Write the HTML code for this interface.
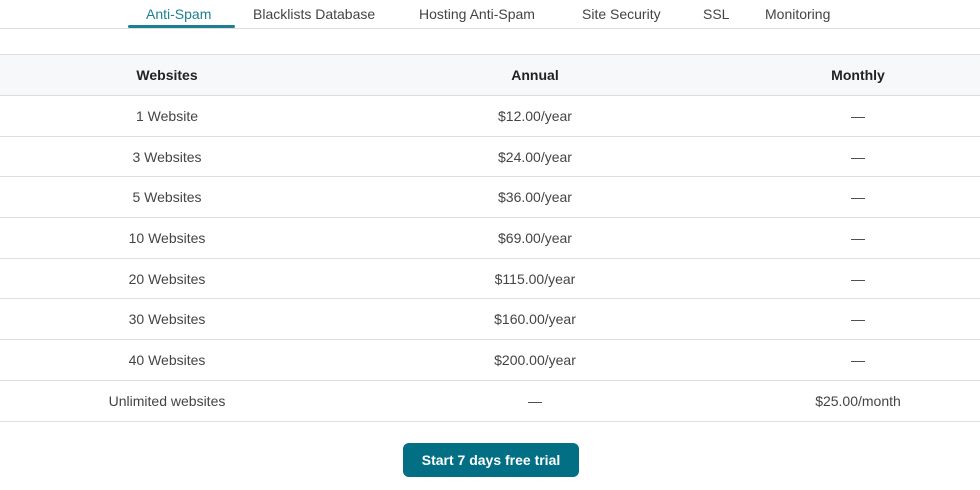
<!DOCTYPE html>
<html><head><style>
body{margin:0;width:980px;height:490px;background:#fff;font-family:"Liberation Sans",sans-serif;color:#333;position:relative;overflow:hidden}
.tabs{position:absolute;top:0;left:0;width:980px;height:28px;border-bottom:1px solid #ddd}
.tab{position:absolute;top:6px;font-size:14px;color:#444}
.act{color:#1e7f92}
.ul{position:absolute;left:128px;top:25px;width:107px;height:3px;background:#1e7f92;border-radius:2px}
table{position:absolute;top:54px;left:0;width:980px;border-collapse:collapse;font-size:14px}
th,td{height:39.7px;border-top:1px solid #ddd;border-bottom:1px solid #ddd;text-align:center;padding:0}
th{background:#f7f8fa;font-weight:bold;color:#222;height:40px}
td{color:#444}
.btn{position:absolute;left:403px;top:443px;width:176px;height:34px;background:#026f84;border-radius:6px;color:#fff;font-size:14px;font-weight:bold;text-align:center;line-height:35px}
</style></head><body>
<div class="tabs">
<span class="tab act" style="left:146px">Anti-Spam</span>
<span class="tab" style="left:253px">Blacklists Database</span>
<span class="tab" style="left:419px">Hosting Anti-Spam</span>
<span class="tab" style="left:582px">Site Security</span>
<span class="tab" style="left:703px">SSL</span>
<span class="tab" style="left:765px">Monitoring</span>
<div class="ul"></div>
</div>
<table>
<colgroup><col style="width:334px"><col style="width:402px"><col style="width:244px"></colgroup>
<tr><th>Websites</th><th>Annual</th><th>Monthly</th></tr>
<tr><td>1 Website</td><td>$12.00/year</td><td>—</td></tr>
<tr><td>3 Websites</td><td>$24.00/year</td><td>—</td></tr>
<tr><td>5 Websites</td><td>$36.00/year</td><td>—</td></tr>
<tr><td>10 Websites</td><td>$69.00/year</td><td>—</td></tr>
<tr><td>20 Websites</td><td>$115.00/year</td><td>—</td></tr>
<tr><td>30 Websites</td><td>$160.00/year</td><td>—</td></tr>
<tr><td>40 Websites</td><td>$200.00/year</td><td>—</td></tr>
<tr><td>Unlimited websites</td><td>—</td><td>$25.00/month</td></tr>
</table>
<div class="btn">Start 7 days free trial</div>
</body></html>
